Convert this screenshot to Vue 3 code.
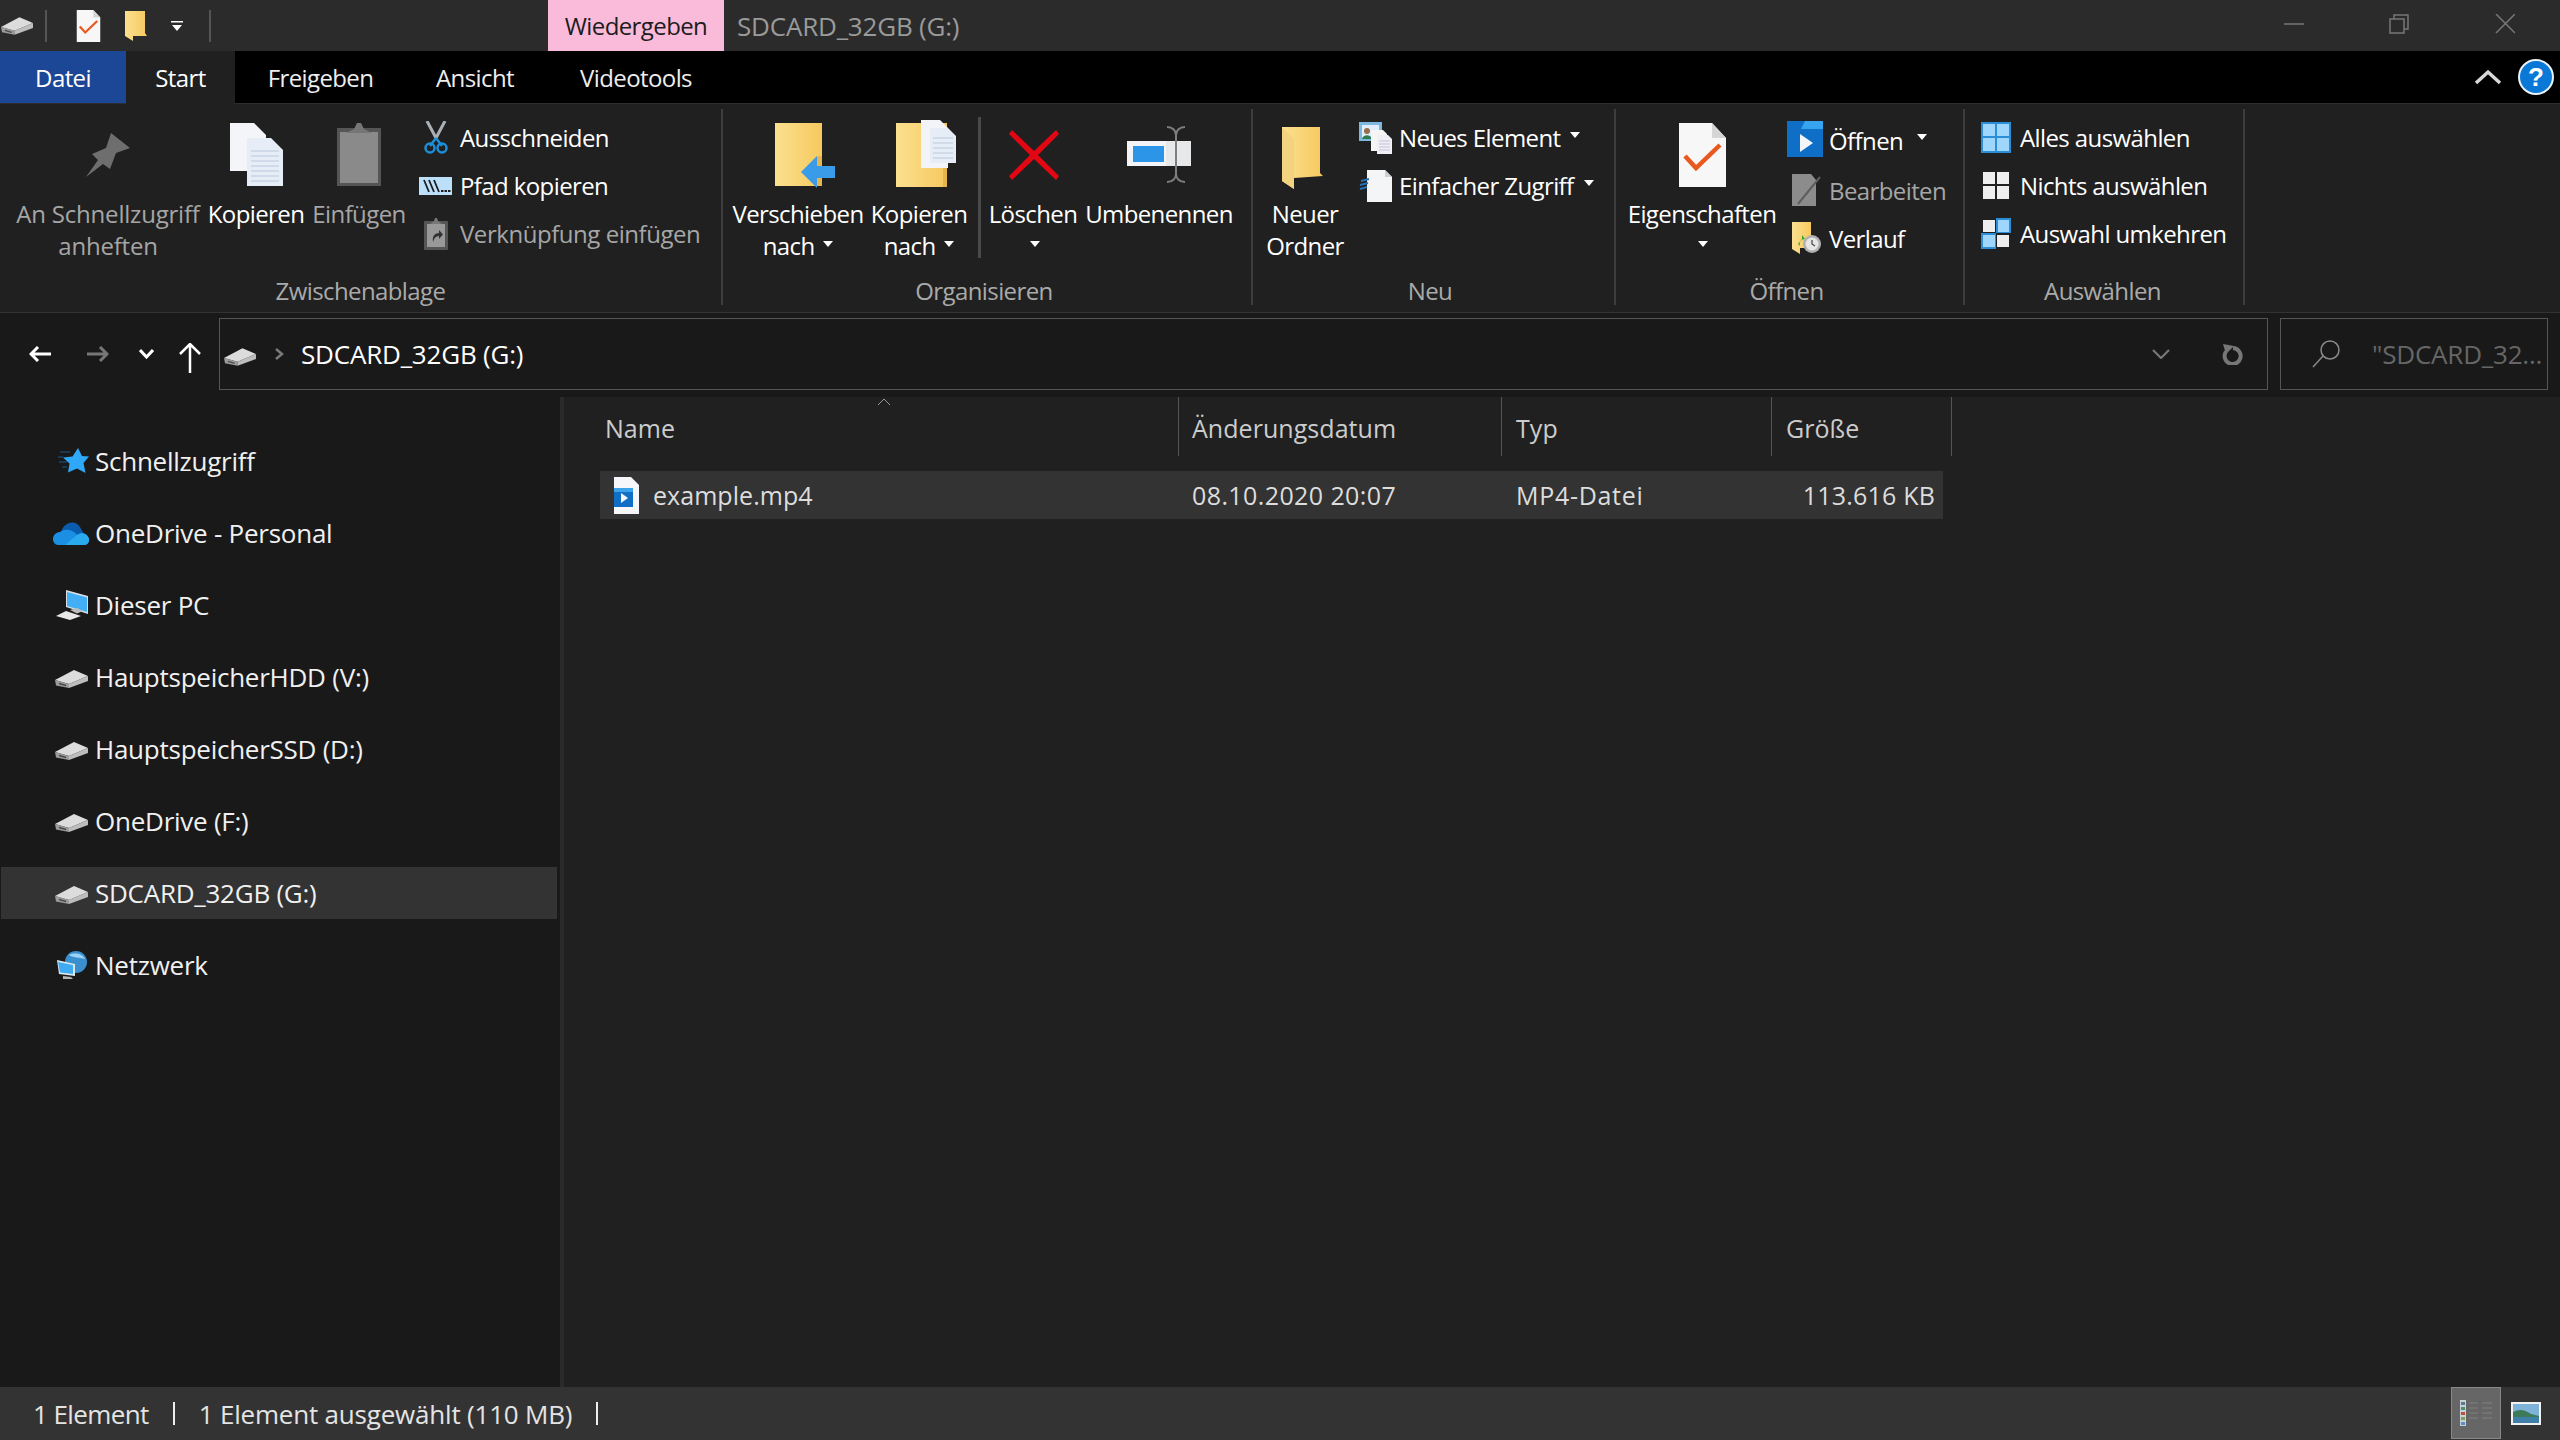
<script setup>
const sidebar = [
  { icon: 'star', label: 'Schnellzugriff' },
  { icon: 'cloud', label: 'OneDrive - Personal' },
  { icon: 'pc', label: 'Dieser PC' },
  { icon: 'drive', label: 'HauptspeicherHDD (V:)' },
  { icon: 'drive', label: 'HauptspeicherSSD (D:)' },
  { icon: 'drive', label: 'OneDrive (F:)' },
  { icon: 'drive', label: 'SDCARD_32GB (G:)', active: true },
  { icon: 'net', label: 'Netzwerk' }
]
const columns = [
  { label: 'Name', cls: 'c-name' },
  { label: 'Änderungsdatum', cls: 'c-date' },
  { label: 'Typ', cls: 'c-type' },
  { label: 'Größe', cls: 'c-size' }
]
</script>

<template>
  <div class="win">
    <svg class="defs" aria-hidden="true">
      <defs>
        <linearGradient id="fold" x1="0" y1="0" x2="1" y2="0"><stop offset="0" stop-color="#fbe08f"/><stop offset="1" stop-color="#f6c95f"/></linearGradient>
      </defs>
      <symbol id="drive" viewBox="0 0 34 18">
        <path d="M0 10 19 0 33 6 14 14Z" fill="#dcdcdc"/>
        <path d="M0 10 14 14V18L1 15.500Z" fill="#9c9c9c"/>
        <path d="M14 14 33 6V11L14 18Z" fill="#bdbdbd"/>
        <path d="M4 13.500 11 15.500" stroke="#4a4a4a" stroke-width="1.400"/>
      </symbol>
      <symbol id="star" viewBox="0 0 32 26">
        <path d="M21 0 25 8 32 8.500 26.500 15 28.500 25 20 20.500 11 24.500 12.500 15.500 6 9.500 15.500 8.500Z" fill="#2fa8f7"/>
        <path d="M3 4H13M1 9H6M2 14H10M5 19H10" stroke="#1d5a88" stroke-width="1.200"/>
      </symbol>
      <symbol id="cloud" viewBox="0 0 36 24">
        <path d="M8 12C9 3 21-3 27 6 L31 13 14 18Z" fill="#0b5cad"/>
        <path d="M5 24C-2 23-2 12 7 11 13 6 22 10 24 14 31 9 37 16 36 20 35 23 33 24 31 24Z" fill="#1a8fe3"/>
        <path d="M12 24 24 14C31 9 37 16 36 20 35 23 33 24 31 24Z" fill="#2aa9ef"/>
      </symbol>
      <symbol id="pc" viewBox="0 0 33 30">
        <path d="M10 0 32 6V24L10 17Z" fill="#d5dde5"/>
        <path d="M11 2 31 7.500V22L11 16Z" fill="#41aef5"/>
        <path d="M0 26 10 21 25 26 14 30Z" fill="#e8e8e8"/>
        <path d="M14 20 21 18 27 21 21 23.500Z" fill="#bdbdbd"/>
      </symbol>
      <symbol id="net" viewBox="0 0 32 28">
        <circle cx="19" cy="11" r="11" fill="#3a8fcf"/>
        <path d="M12 4C18 1 26 3 28 8 22 6 16 7 12 4Z" fill="#9ad3f5"/>
        <path d="M0 9 18 13V25L2 23Z" fill="#dfe7ee"/>
        <path d="M1 11 16 14V23L3 21.500Z" fill="#3eabf3"/>
        <path d="M6 25 14 26 16 28H6Z" fill="#b5b5b5"/>
      </symbol>
      <symbol id="caret" viewBox="0 0 10 6"><path d="M0 0H10L5 6Z" fill="#fff"/></symbol>
      <symbol id="doc-check" viewBox="0 0 47 64">
        <path d="M0 0H33L47 15V64H0Z" fill="#f7f7f7"/>
        <path d="M33 0 47 15H33Z" fill="#d5d5d5"/>
        <path d="M6 33 17 45 41 22" fill="none" stroke="#e8581f" stroke-width="4.500"/>
      </symbol>
    </svg>

    <header class="title">
      <div class="qat">
        <svg class="i-qdrive"><use href="#drive"/></svg>
        <span class="qsep q1"></span>
        <svg class="i-qdoc"><use href="#doc-check"/></svg>
        <svg class="i-qfold" viewBox="0 0 22 30"><path d="M0 0H20V22L22 25 8 25 8 30 0 25Z" fill="url(#fold)"/></svg>
        <svg class="i-qdrop" viewBox="0 0 12 10"><path d="M0 0H12V1.500H0ZM1 4H11L6 10Z" fill="#fff"/></svg>
        <span class="qsep q2"></span>
      </div>
      <div class="ctx">Wiedergeben</div>
      <div class="wtitle">SDCARD_32GB (G:)</div>
      <div class="wctl">
        <svg class="w1" viewBox="0 0 20 2"><path d="M0 1H20" stroke="#777" stroke-width="1.500"/></svg>
        <svg class="w2" viewBox="0 0 20 20" fill="none" stroke="#777" stroke-width="1.500"><rect x="1" y="5" width="14" height="14"/><path d="M5 5V1H19V15H15"/></svg>
        <svg class="w3" viewBox="0 0 20 20"><path d="M1 0 20 19M20 0 1 19" stroke="#777" stroke-width="1.500"/></svg>
      </div>
    </header>

    <nav class="tabs">
      <div class="tab datei">Datei</div>
      <div class="tab start">Start</div>
      <div class="tab t-frei">Freigeben</div>
      <div class="tab t-ans">Ansicht</div>
      <div class="tab t-vid">Videotools</div>
      <div class="tabs-right">
        <svg class="chev" viewBox="0 0 28 16"><path d="M2 14 14 3 26 14" fill="none" stroke="#d8d8d8" stroke-width="3.500"/></svg>
        <div class="help">?</div>
      </div>
    </nav>

    <section class="ribbon">
      <div class="group g1">
        <div class="gbody">
          <div class="big w-pin dim">
            <div class="ibox">
              <svg class="i-pin" viewBox="0 0 44 44"><path d="M0 44 12 27 6 21 20 15 25 0 44 15 30 20 24 36 17 31Z" fill="#6e6e6e"/></svg>
            </div>
            <div class="lbl lbl-wide">An Schnellzugriff<br>anheften</div>
          </div>
          <div class="big w-kop">
            <div class="ibox">
              <svg class="i-copy" viewBox="0 0 53 63">
                <path d="M0 0H24L36 12V48H0Z" fill="#f3f5f8"/>
                <path d="M17 15H41L53 27V63H17Z" fill="#e6edf6"/>
                <path d="M21 28H49M21 33H49M21 38H49M21 43H49M21 48H49M21 53H49M21 58H49" stroke="#b9c8dc" stroke-width="1"/>
              </svg>
            </div>
            <div class="lbl">Kopieren</div>
          </div>
          <div class="big w-einf dim">
            <div class="ibox">
              <svg class="i-paste" viewBox="0 0 44 63">
                <rect y="5" width="44" height="58" fill="#555"/>
                <rect x="3" y="9" width="38" height="51" fill="#8a8a8a"/>
                <path d="M9 10 17 6 20 0H24L27 6 35 10Z" fill="#767676"/>
              </svg>
            </div>
            <div class="lbl">Einfügen</div>
          </div>
          <div class="small-col sc1">
            <div class="srow">
              <svg class="si i-scis" viewBox="0 0 24 33">
                <path d="M3 0 12 17M21 0 12 17" stroke="#aab0b5" stroke-width="3"/>
                <path d="M12 17 6 25M12 17 18 25" stroke="#1c8fd8" stroke-width="2.500"/>
                <circle cx="6" cy="27" r="4.500" fill="none" stroke="#1c8fd8" stroke-width="2.500"/>
                <circle cx="18" cy="27" r="4.500" fill="none" stroke="#1c8fd8" stroke-width="2.500"/>
              </svg>
              <span>Ausschneiden</span>
            </div>
            <div class="srow">
              <svg class="si i-path" viewBox="0 0 33 18">
                <rect width="33" height="18" fill="#bcdffa"/>
                <path d="M5 3 10 15M10 3 15 15M15 3 20 15" stroke="#1d1d1d" stroke-width="1.800"/>
                <path d="M22 14H24.500M25.500 14H28M29 14H31.500" stroke="#1d1d1d" stroke-width="1.800"/>
              </svg>
              <span>Pfad kopieren</span>
            </div>
            <div class="srow dim">
              <svg class="si i-short" viewBox="0 0 24 32">
                <rect y="3" width="24" height="29" rx="1" fill="#555"/>
                <rect x="3" y="6" width="18" height="23" fill="#999"/>
                <path d="M6 6 10 3 11 0H13L14 3 18 6Z" fill="#777"/>
                <path d="M9 24C8 18 11 15 15 15V12L19 16.500 15 21V18C12 18 10 20 9 24Z" fill="#333"/>
              </svg>
              <span class="sp-wide">Verknüpfung einfügen</span>
            </div>
          </div>
        </div>
        <div class="glabel">Zwischenablage</div>
      </div>

      <div class="group g2">
        <div class="gbody">
          <div class="big w-ver">
            <div class="ibox">
              <svg class="i-move" viewBox="0 0 60 65">
                <path d="M0 0H47V63H0Z" fill="url(#fold)"/>
                <path d="M42 33V63H47V33Z" fill="#e6b64c"/>
                <path d="M42 33 26 49 42 65V55H60V43H42Z" fill="#3a9be8"/>
              </svg>
            </div>
            <div class="lbl">Verschieben<br>nach <svg class="car"><use href="#caret"/></svg></div>
          </div>
          <div class="big w-kn">
            <div class="ibox">
              <svg class="i-copyto" viewBox="0 0 60 67">
                <path d="M0 3H51V67H0Z" fill="url(#fold)"/>
                <path d="M47 42H51V67H47Z" fill="#e6b64c"/>
                <path d="M25 0H44L52 8V48H25Z" fill="#f2f4f7"/>
                <path d="M34 8H52L60 16V43H34Z" fill="#e6edf6"/>
                <path d="M37 18H57M37 23H57M37 28H57M37 33H57M37 38H57" stroke="#b9c8dc"/>
              </svg>
            </div>
            <div class="lbl">Kopieren<br>nach <svg class="car"><use href="#caret"/></svg></div>
          </div>
          <span class="vsep"></span>
          <div class="big w-los">
            <div class="ibox">
              <svg class="i-del" viewBox="0 0 50 50"><path d="M3 0 25 21 47 0 50 4 29 25 50 46 47 50 25 29 3 50 0 46 21 25 0 4Z" fill="#e30613"/></svg>
            </div>
            <div class="lbl">Löschen<br><svg class="car"><use href="#caret"/></svg></div>
          </div>
          <div class="big w-umb">
            <div class="ibox">
              <svg class="i-ren" viewBox="0 0 64 57">
                <rect y="15" width="64" height="25" fill="#f2f4f7"/>
                <rect x="6" y="20" width="31" height="16" fill="#2d95e8"/>
                <path d="M39 15H64V40H39Z" fill="#e6e8ea"/>
                <path d="M40 1C46 1 49 5 49 9V48C49 52 46 56 40 56M58 1C52 1 49 5 49 9M49 48C49 52 52 56 58 56" fill="none" stroke="#7f7f7f" stroke-width="2"/>
              </svg>
            </div>
            <div class="lbl">Umbenennen</div>
          </div>
        </div>
        <div class="glabel">Organisieren</div>
      </div>

      <div class="group g3">
        <div class="gbody">
          <div class="big w-neu">
            <div class="ibox">
              <svg class="i-newf" viewBox="0 0 41 62">
                <path d="M0 0H38V46L41 49 12 51V62L0 54Z" fill="url(#fold)"/>
                <path d="M0 0 12 12V62L0 54Z" fill="#f3d280"/>
              </svg>
            </div>
            <div class="lbl">Neuer<br>Ordner</div>
          </div>
          <div class="small-col sc3">
            <div class="srow">
              <svg class="si i-newel" viewBox="0 0 33 32">
                <rect width="23" height="19" fill="#7fb8de"/>
                <rect x="3" y="3" width="17" height="14" fill="#dfeef8"/>
                <circle cx="8" cy="9" r="3" fill="#9a6b4a"/>
                <path d="M3 17C4 12 12 12 13 17Z" fill="#2f7a4f"/>
                <path d="M12 8H24L28 12V29H12Z" fill="#f5f5f5"/>
                <path d="M18 13H29L33 17V32H18Z" fill="#eef0f6"/>
                <path d="M20 19H31M20 22H31M20 25H31M20 28H31" stroke="#c9bedb"/>
              </svg>
              <span>Neues Element</span><svg class="car c-s"><use href="#caret"/></svg>
            </div>
            <div class="srow">
              <svg class="si i-easy" viewBox="0 0 33 33">
                <path d="M8 1H26L33 8V33H8Z" fill="#f4f5f7"/>
                <path d="M26 1 33 8H26Z" fill="#cfcfcf"/>
                <path d="M2 12 10 10M1 16 9 14M1 20 8 18" stroke="#2a6fb2" stroke-width="2"/>
              </svg>
              <span>Einfacher Zugriff</span><svg class="car c-s"><use href="#caret"/></svg>
            </div>
          </div>
        </div>
        <div class="glabel">Neu</div>
      </div>

      <div class="group g4">
        <div class="gbody">
          <div class="big w-eig">
            <div class="ibox">
              <svg class="i-prop"><use href="#doc-check"/></svg>
            </div>
            <div class="lbl">Eigenschaften<br><svg class="car"><use href="#caret"/></svg></div>
          </div>
          <div class="small-col sc4">
            <div class="srow r-off">
              <svg class="si i-open" viewBox="0 0 36 36">
                <rect width="36" height="36" fill="#0f6fc6"/>
                <path d="M18 0H36V8H14Z" fill="#36a4ee"/>
                <path d="M13 13 26 22 13 31Z" fill="#f2f6fa"/>
              </svg>
              <span>Öffnen</span><svg class="car c-s c-off"><use href="#caret"/></svg>
            </div>
            <div class="srow r-bear dim">
              <svg class="si i-edit" viewBox="0 0 30 32">
                <path d="M0 0H19L24 6V32H0Z" fill="#8c8c8c"/>
                <path d="M6 30 28 3" stroke="#5d5d5d" stroke-width="2"/>
              </svg>
              <span>Bearbeiten</span>
            </div>
            <div class="srow r-ver">
              <svg class="si i-hist" viewBox="0 0 29 32">
                <path d="M0 0H19V26H8V32L0 27Z" fill="url(#fold)"/>
                <circle cx="20" cy="22" r="9" fill="#b0b0b0"/>
                <circle cx="20" cy="22" r="6.500" fill="#e6e6e6"/>
                <path d="M20 18V22L23 24" stroke="#444" stroke-width="1.200" fill="none"/>
                <path d="M8 24C7 20 9 17 13 17L10 13V17L6 22Z" fill="#2fa52f"/>
              </svg>
              <span>Verlauf</span>
            </div>
          </div>
        </div>
        <div class="glabel">Öffnen</div>
      </div>

      <div class="group g5">
        <div class="gbody">
          <div class="small-col sc5">
            <div class="srow">
              <svg class="si i-sel" viewBox="0 0 30 31">
                <rect width="30" height="31" fill="#2d8ed8"/>
                <path d="M2 2H14V14H2ZM16 2H28V14H16ZM2 16H14V29H2ZM16 16H28V29H16Z" fill="#9fd6fb"/>
              </svg>
              <span>Alles auswählen</span>
            </div>
            <div class="srow">
              <svg class="si i-sel" viewBox="0 0 30 31">
                <path d="M2 2H14V14H2ZM16 2H28V14H16ZM2 16H14V29H2ZM16 16H28V29H16Z" fill="#eeeeee"/>
              </svg>
              <span>Nichts auswählen</span>
            </div>
            <div class="srow">
              <svg class="si i-sel" viewBox="0 0 30 31">
                <path d="M15 0H30V15H15ZM0 15H15V31H0Z" fill="#2d8ed8"/>
                <path d="M17 2H28V14H17ZM2 17H14V29H2Z" fill="#9fd6fb"/>
                <path d="M2 2H14V14H2ZM16 17H28V29H16Z" fill="#eeeeee"/>
              </svg>
              <span>Auswahl umkehren</span>
            </div>
          </div>
        </div>
        <div class="glabel">Auswählen</div>
      </div>
    </section>

    <section class="addr">
      <div class="nav">
        <svg class="n-back" viewBox="0 0 22 16"><path d="M9 1 2 8 9 15M2 8H22" fill="none" stroke="#fff" stroke-width="3"/></svg>
        <svg class="n-fwd" viewBox="0 0 22 16"><path d="M13 1 20 8 13 15M0 8H20" fill="none" stroke="#777" stroke-width="3"/></svg>
        <svg class="n-down" viewBox="0 0 15 10"><path d="M1 1 7.500 8 14 1" fill="none" stroke="#fff" stroke-width="3"/></svg>
        <svg class="n-up" viewBox="0 0 22 30"><path d="M1 11 11 1 21 11M11 1V30" fill="none" stroke="#fff" stroke-width="2.500"/></svg>
      </div>
      <div class="abox">
        <svg class="a-drive"><use href="#drive"/></svg>
        <svg class="a-chev" viewBox="0 0 9 12"><path d="M1 1 7 6 1 11" fill="none" stroke="#7a7a7a" stroke-width="2.500"/></svg>
        <span class="a-text">SDCARD_32GB (G:)</span>
        <svg class="a-drop" viewBox="0 0 18 10"><path d="M1 1 9 9 17 1" fill="none" stroke="#777" stroke-width="2.200"/></svg>
        <svg class="a-ref" viewBox="0 0 22 22">
          <path d="M12 5A8 8 0 1 1 5 8.500" fill="none" stroke="#777" stroke-width="4"/>
          <path d="M2 1 13 3 5 11Z" fill="#777"/>
        </svg>
      </div>
      <div class="sbox">
        <svg class="s-mag" viewBox="0 0 28 28"><circle cx="18" cy="10" r="9" fill="none" stroke="#8a8a8a" stroke-width="1.500"/><path d="M11 16 1 27" stroke="#8a8a8a" stroke-width="1.500"/></svg>
        <span class="s-text">"SDCARD_32...</span>
      </div>
    </section>

    <main class="main">
      <aside class="side">
        <div v-for="item in sidebar" :key="item.label" class="sitem" :class="{ on: item.active }">
          <svg class="sic" :class="'sic-' + item.icon"><use :href="'#' + item.icon"/></svg>
          <span>{{ item.label }}</span>
        </div>
      </aside>
      <div class="content">
        <div class="chead">
          <div v-for="c in columns" :key="c.label" class="col" :class="c.cls">{{ c.label }}</div>
          <svg class="sort" viewBox="0 0 14 8"><path d="M1 7 7 1 13 7" fill="none" stroke="#9a9a9a" stroke-width="1"/></svg>
        </div>
        <div class="frow">
          <div class="cell c-name">
            <svg class="ficon" viewBox="0 0 25 37">
              <path d="M0 0H17L25 8V37H0Z" fill="#f5f7fa"/>
              <rect x="0" y="11" width="19" height="19" fill="#106fc4"/>
              <path d="M0 11H19V15H0Z" fill="#3aa3ea"/>
              <path d="M7 16 14 21 7 26Z" fill="#f2f6fa"/>
            </svg>
            <span>example.mp4</span>
          </div>
          <div class="cell c-date">08.10.2020 20:07</div>
          <div class="cell c-type">MP4-Datei</div>
          <div class="cell c-size num">113.616 KB</div>
        </div>
      </div>
    </main>

    <footer class="status">
      <span class="st st1">1 Element</span>
      <span class="stsep"></span>
      <span class="st st2">1 Element ausgewählt (110 MB)</span>
      <span class="stsep"></span>
      <div class="views">
        <div class="vbtn">
          <svg class="v-list" viewBox="0 0 32 26">
            <rect width="6" height="26" fill="#c9d2da"/>
            <rect x="1" y="2" width="4" height="3" fill="#5f7a8f"/>
            <rect x="1" y="7" width="4" height="3" fill="#4d8f6a"/>
            <rect x="1" y="12" width="4" height="3" fill="#c0503a"/>
            <rect x="1" y="17" width="4" height="3" fill="#7fa05a"/>
            <rect x="1" y="22" width="4" height="3" fill="#5f8fc0"/>
            <path d="M9 3H18M22 3H32M9 8H18M22 8H32M9 13H18M22 13H32M9 18H18M22 18H32" stroke="#808080"/>
          </svg>
        </div>
        <svg class="v-thumb" viewBox="0 0 30 23">
          <rect width="30" height="23" fill="#f2f2f2"/>
          <rect x="2" y="2" width="26" height="19" fill="#7fb2d8"/>
          <path d="M2 10C8 7 13 7 20 12L28 14V16H2Z" fill="#3d7a5a"/>
          <rect x="2" y="15" width="26" height="6" fill="#3f7fa8"/>
        </svg>
      </div>
    </footer>
  </div>
</template>

<style>
html, body { margin: 0; background: #202020; }
</style>

<style scoped>
.win {
  width: 2560px;
  height: 1440px;
  display: flex;
  flex-direction: column;
  overflow: hidden;
  font-family: "Open Sans", "Noto Sans", sans-serif;
  font-size: 24px;
  letter-spacing: -0.6px;
  color: #fff;
  background: #202020;
}
.defs { position: absolute; width: 0; height: 0; }

.title { height: 51px; flex: none; display: flex; background: #2b2b2b; }
.qat { width: 548px; display: flex; align-items: center; flex: none; }
.qsep { width: 2px; height: 32px; background: #555; }
.q1 { margin-left: 11px; }
.i-qdrive { width: 33px; height: 18px; margin-left: 1px; margin-top: 1px; }
.i-qdoc { width: 25px; height: 32px; margin-left: 29px; }
.i-qfold { width: 22px; height: 30px; margin-left: 24px; }
.i-qdrop { width: 12px; height: 10px; margin-left: 24px; }
.q2 { margin-left: 26px; }
.ctx { width: 176px; background: #f9bbd9; color: #1c1c1c; display: flex; align-items: center; justify-content: center; flex: none; }
.wtitle { margin-left: 13px; color: #9a9a9a; line-height: 53px; white-space: nowrap; font-size: 26px; letter-spacing: -0.2px; }
.wctl { margin-left: auto; position: relative; display: flex; align-items: flex-start; }
.w1 { width: 20px; height: 2px; margin-top: 23px; margin-right: 85px; }
.w2 { width: 20px; height: 20px; margin-top: 14px; margin-right: 86px; }
.w3 { width: 20px; height: 20px; margin-top: 14px; margin-right: 45px; }

.tabs { height: 52px; flex: none; display: flex; background: #000; border-bottom: 1px solid #2e2e2e; box-sizing: content-box; }
.tab { display: flex; align-items: center; justify-content: center; height: 52px; white-space: nowrap; color: #eee; flex: none; }
.datei { width: 126px; background: #1c4696; color: #fff; }
.start { width: 109px; background: #202020; color: #fff; height: 53px; }
.t-frei { width: 171px; }
.t-ans { width: 138px; }
.t-vid { width: 176px; margin-left: 4px; }
.tabs-right { margin-left: auto; display: flex; align-items: center; }
.chev { width: 28px; height: 16px; margin-right: 16px; }
.help { box-sizing: border-box; width: 36px; height: 36px; margin-right: 6px; border-radius: 50%; border: 2px solid #e8f2fb; background: #0a78d7; font-family: "Liberation Sans", sans-serif; font-size: 26px; line-height: 32px; text-align: center; color: #fff; font-weight: bold; letter-spacing: 0; }

.ribbon { height: 208px; flex: none; display: flex; background: #202020; border-bottom: 1px solid #333; }
.group { position: relative; display: flex; flex-direction: column; flex: none; box-sizing: border-box; }
.group::after { content: ""; position: absolute; right: 0; top: 5px; height: 196px; width: 2px; background: #3d3d3d; }
.g1 { width: 723px; padding-left: 8px; }
.g2 { width: 530px; padding-left: 10px; }
.g3 { width: 363px; padding-left: 7px; }
.g4 { width: 349px; padding-left: 6px; }
.g5 { width: 280px; padding-left: 16px; }
.gbody { height: 171px; display: flex; align-items: flex-start; }
.glabel { height: 32px; line-height: 32px; text-align: center; color: #aaa; white-space: nowrap; }
.g1 .glabel { padding-right: 10px; }
.g2 .glabel { padding-right: 18px; }
.g3 .glabel { padding-right: 16px; }
.g4 .glabel { padding-right: 14px; }
.g5 .glabel { padding-right: 21px; }

.big { display: flex; flex-direction: column; align-items: center; flex: none; padding-top: 11px; }
.ibox { height: 83px; display: flex; align-items: flex-start; justify-content: center; }
.lbl { text-align: center; line-height: 32px; white-space: nowrap; }
.lbl-wide { letter-spacing: -0.2px; }
.sp-wide { letter-spacing: -0.45px; }
.dim { color: #a6a6a6; }
.w-pin { width: 200px; }
.w-kop { width: 96px; }
.w-einf { width: 110px; }
.w-ver { width: 130px; }
.w-kn { width: 112px; }
.w-los { width: 100px; }
.w-umb { width: 152px; }
.w-neu { width: 90px; }
.w-eig { width: 160px; }
.vsep { width: 3px; height: 141px; margin: 13px 2px 0 3px; background: #4a4a4a; flex: none; }
.car { width: 10px; height: 6px; vertical-align: 8px; margin-left: 3px; }
.c-s { margin-left: 10px; align-self: center; margin-top: -6px; }
.c-off { margin-left: 14px; }
.lbl .car:first-child { margin-left: 0; vertical-align: 8px; }

.i-pin { width: 44px; height: 44px; margin-top: 18px; }
.i-copy { width: 53px; height: 63px; margin-top: 8px; }
.i-paste { width: 44px; height: 63px; margin-top: 8px; }
.i-move { width: 60px; height: 65px; margin-top: 8px; margin-left: 13px; }
.i-copyto { width: 60px; height: 67px; margin-top: 5px; margin-left: 14px; }
.i-del { width: 50px; height: 50px; margin-top: 15px; margin-left: 2px; }
.i-ren { width: 64px; height: 57px; margin-top: 11px; }
.i-newf { width: 41px; height: 62px; margin-top: 12px; margin-right: 5px; }
.i-prop { width: 47px; height: 64px; margin-top: 8px; }

.small-col { display: flex; flex-direction: column; flex: none; padding-top: 9.500px; }
.sc1 { margin-left: 5px; }
.sc3 { margin-left: 9px; }
.sc4 { margin-left: 5px; }
.srow { height: 48px; display: flex; align-items: center; white-space: nowrap; position: relative; }
.si { flex: none; margin-right: 8px; }
.i-scis { width: 24px; height: 33px; margin-left: 5px; margin-right: 12px; }
.i-path { width: 33px; height: 18px; }
.i-short { width: 24px; height: 32px; margin-left: 5px; margin-right: 12px; }
.i-newel { width: 33px; height: 32px; margin-right: 7px; }
.i-easy { width: 33px; height: 33px; margin-right: 7px; }
.i-open { width: 36px; height: 36px; margin-right: 6px; margin-bottom: 2px; }
.i-edit { width: 30px; height: 32px; margin-left: 5px; margin-right: 7px; }
.i-hist { width: 29px; height: 32px; margin-left: 5px; margin-right: 8px; }
.i-sel { width: 30px; height: 31px; margin-right: 9px; }
.r-off { margin-top: 2.500px; }
.r-bear { height: 52px; }
.r-ver { height: 44px; }

.addr { height: 84px; flex: none; display: flex; align-items: flex-start; background: #191919; box-sizing: border-box; padding-top: 5px; }
.nav { width: 219px; height: 72px; display: flex; align-items: center; flex: none; position: relative; }
.n-back { width: 22px; height: 16px; margin-left: 29px; }
.n-fwd { width: 22px; height: 16px; margin-left: 36px; }
.n-down { width: 15px; height: 10px; margin-left: 30px; }
.n-up { width: 22px; height: 30px; margin-left: 25px; margin-top: 8px; }
.abox { width: 2049px; height: 72px; box-sizing: border-box; border: 1px solid #555; display: flex; align-items: center; flex: none; font-size: 26px; letter-spacing: -0.2px; }
.a-drive { width: 33px; height: 18px; margin-left: 4px; margin-top: 5px; }
.a-chev { width: 9px; height: 12px; margin-left: 18px; }
.a-text { margin-left: 17px; white-space: nowrap; }
.a-drop { width: 18px; height: 10px; margin-left: auto; margin-right: 51px; }
.a-ref { width: 22px; height: 22px; margin-right: 24px; }
.sbox { width: 268px; height: 72px; box-sizing: border-box; border: 1px solid #555; display: flex; align-items: center; margin-left: 12px; flex: none; color: #666; font-size: 26px; letter-spacing: -0.2px; }
.s-mag { width: 28px; height: 28px; margin-left: 31px; }
.s-text { margin-left: 32px; white-space: nowrap; }

.main { flex: 1; display: flex; min-height: 0; }
.side { width: 560px; flex: none; background: #191919; border-right: 4px solid #2a2a2a; padding-top: 38px; box-sizing: content-box; font-size: 26px; letter-spacing: -0.25px; }
.sitem { height: 51.500px; margin-bottom: 20.500px; display: flex; align-items: center; margin-left: 1px; margin-right: 3px; }
.sitem.on { background: #333; }
.sitem span { margin-left: 6px; white-space: nowrap; color: #f0f0f0; }
.sic { flex: none; width: 34px; height: 18px; margin-left: 54px; margin-top: 5px; }
.sic-star { height: 26px; width: 32px; margin-left: 56px; margin-top: 0; }
.sic-cloud { height: 24px; width: 36px; margin-left: 52px; margin-top: 0; }
.sic-pc { height: 30px; width: 33px; margin-left: 55px; margin-top: 0; }
.sic-net { height: 28px; width: 32px; margin-left: 56px; margin-top: 0; }

.content { flex: 1; background: #202020; min-width: 0; font-size: 25px; letter-spacing: 0.05px; }
.chead { position: relative; height: 59px; display: flex; }
.col { box-sizing: border-box; height: 59px; line-height: 63px; border-right: 1px solid #555; color: #ccc; white-space: nowrap; }
.sort { position: absolute; left: 313px; top: 1px; width: 14px; height: 8px; }
.c-name { width: 615px; padding-left: 41px; flex: none; box-sizing: border-box; }
.c-date { width: 323px; padding-left: 13px; flex: none; box-sizing: border-box; }
.c-type { width: 270px; padding-left: 14px; flex: none; box-sizing: border-box; }
.c-size { width: 180px; padding-left: 14px; flex: none; box-sizing: border-box; }

.frow { margin-top: 15px; margin-left: 36px; width: 1343px; height: 48px; display: flex; background: #333; color: #ddd; line-height: 50px; }
.cell { display: flex; align-items: center; white-space: nowrap; }
.frow .c-name { width: 579px; padding-left: 14px; }
.frow .c-date { letter-spacing: 0.4px; }
.frow .c-type { letter-spacing: 0.7px; }
.ficon { width: 25px; height: 37px; margin-right: 14px; }
.frow .c-size { width: 171px; padding: 0 8px 0 0; justify-content: flex-end; letter-spacing: 0.2px; }

.status { height: 53px; flex: none; background: #333; display: flex; align-items: center; color: #e4e4e4; position: relative; font-size: 26px; letter-spacing: -0.2px; }
.st { white-space: nowrap; }
.st1 { margin-left: 33px; letter-spacing: -0.6px; }
.stsep { width: 2px; height: 23px; background: #eee; margin: 0 24px; flex: none; }
.views { margin-left: auto; display: flex; align-items: center; height: 53px; }
.vbtn { width: 50px; height: 52px; box-sizing: border-box; background: #666; border: 1px solid #888; display: flex; align-items: center; justify-content: center; align-self: flex-start; }
.v-list { width: 32px; height: 26px; }
.v-thumb { width: 30px; height: 23px; margin-left: 10px; margin-right: 19px; }
</style>
